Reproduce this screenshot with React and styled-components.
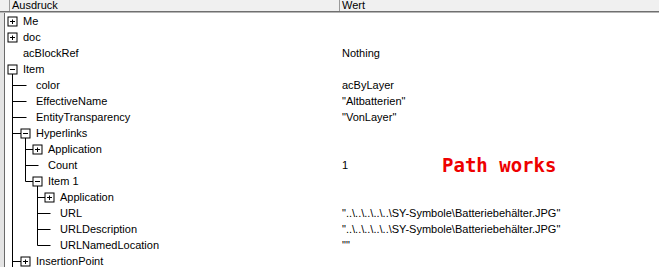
import React from 'react';
import styled, {createGlobalStyle} from 'styled-components';

const ROW = 16;
const CX = [7, 20, 32, 44, 56];

const tree = [
    {name: 'Me', kind: 'plus'},
    {name: 'doc', kind: 'plus'},
    {name: 'acBlockRef', value: 'Nothing'},
    {
        name: 'Item', kind: 'minus', more: true, children: [
            {name: 'color', value: 'acByLayer'},
            {name: 'EffectiveName', value: '"Altbatterien"'},
            {name: 'EntityTransparency', value: '"VonLayer"'},
            {
                name: 'Hyperlinks', kind: 'minus', children: [
                    {name: 'Application', kind: 'plus'},
                    {name: 'Count', value: '1'},
                    {
                        name: 'Item 1', kind: 'minus', children: [
                            {name: 'Application', kind: 'plus'},
                            {name: 'URL', value: '"..\\..\\..\\..\\..\\SY-Symbole\\Batteriebehälter.JPG"'},
                            {name: 'URLDescription', value: '"..\\..\\..\\..\\..\\SY-Symbole\\Batteriebehälter.JPG"'},
                            {name: 'URLNamedLocation', value: '""'},
                        ]
                    },
                ]
            },
            {name: 'InsertionPoint', kind: 'plus'},
        ]
    },
];

// flatten the tree, remembering which ancestor lines keep running
function flatten(nodes, level, guides, out, parentMore) {
    nodes.forEach((n, i) => {
        const last = i === nodes.length - 1 && !parentMore;
        out.push({...n, level, last, guides});
        if (n.children) {
            flatten(n.children, level + 1, level > 0 ? [...guides, !last] : guides, out, n.more);
        }
    });
    return out;
}

const rows = flatten(tree, 0, [], [], false);

function Lines({row}) {
    const {level, kind, last, guides} = row;
    const cx = CX[level] + 0.5;
    const px = level > 0 ? CX[level - 1] + 0.5 : 0;
    return (
        <svg width={CX[level] + 6} height={ROW} style={{flex: 'none', display: 'block'}}>
            {guides.map((on, a) => on && (
                <line key={a} x1={CX[a] + 0.5} x2={CX[a] + 0.5} y1={0} y2={ROW} stroke="#000"/>
            ))}
            {level > 0 && (
                <>
                    <line x1={px} x2={px} y1={0} y2={last ? 8.5 : ROW} stroke="#000"/>
                    <line x1={px} x2={kind ? cx - 4.5 : cx + 1} y1={8.5} y2={8.5} stroke="#000"/>
                </>
            )}
            {kind === 'minus' && (
                <line x1={cx} x2={cx} y1={12.5} y2={ROW} stroke="#000"/>
            )}
            {kind && (
                <>
                    <rect x={cx - 4.5} y={4} width={9} height={9} fill="#fff" stroke="#000"/>
                    <line x1={cx - 2.5} x2={cx + 2.5} y1={8.5} y2={8.5} stroke="#000"/>
                    {kind === 'plus' && <line x1={cx} x2={cx} y1={6.5} y2={11} stroke="#000"/>}
                </>
            )}
        </svg>
    );
}

function App() {
    return (
        <>
            <GlobalStyle/>
            <Panel>
                <Header>
                    <HeadCell width={10}/>
                    <HeadCell width={330}>Ausdruck</HeadCell>
                    <HeadCell grow>Wert</HeadCell>
                </Header>
                <Body>
                    {rows.map((r, i) => (
                        <Row key={i}>
                            <NameCell>
                                <Lines row={r}/>
                                <Label>{r.name}</Label>
                            </NameCell>
                            <ValueCell>{r.value}</ValueCell>
                        </Row>
                    ))}
                    <Note>Path works</Note>
                </Body>
            </Panel>
        </>
    );
}

const GlobalStyle = createGlobalStyle`
  html, body {
    margin: 0;
    background: #fff;
    overflow: hidden;
  }

  body {
    font-family: "Liberation Sans", Arial, sans-serif;
    font-size: 11px;
    color: #000;
  }
`;

const Panel = styled.div`
  width: 659px;
  height: 267px;
  overflow: hidden;
`;

const Header = styled.div`
  display: flex;
  height: 11px;
  background: #f0f0f0;
  border-bottom: 1px solid #6f6f6f;
  box-shadow: 0 1px 0 #b5b5b5;
  margin-bottom: 1px;
`;

const HeadCell = styled.div`
  box-sizing: border-box;
  width: ${p => p.width ? `${p.width}px` : 'auto'};
  flex: ${p => p.grow ? '1' : 'none'};
  padding-left: 2px;
  line-height: 11px;
  white-space: nowrap;
  border-right: ${p => p.grow ? 'none' : '1px solid #9a9a9a'};
`;

const Body = styled.div`
  position: relative;
  border-left: 4px solid #e4e4e4;
  box-shadow: inset 1px 0 0 #6a6a6a;
  padding-left: 1px;
`;

const Row = styled.div`
  display: flex;
  height: ${ROW}px;
  line-height: ${ROW}px;
`;

const NameCell = styled.div`
  display: flex;
  width: 335px;
  flex: none;
  white-space: nowrap;
`;

const Label = styled.span`
  margin-left: 5px;
`;

const ValueCell = styled.div`
  padding-left: 2px;
  white-space: nowrap;
`;

const Note = styled.div`
  position: absolute;
  left: 438px;
  top: 140px;
  font-family: "DejaVu Sans Mono", "Liberation Mono", monospace;
  font-weight: bold;
  font-size: 19px;
  line-height: 24px;
  color: #ee0000;
`;

export default App;
